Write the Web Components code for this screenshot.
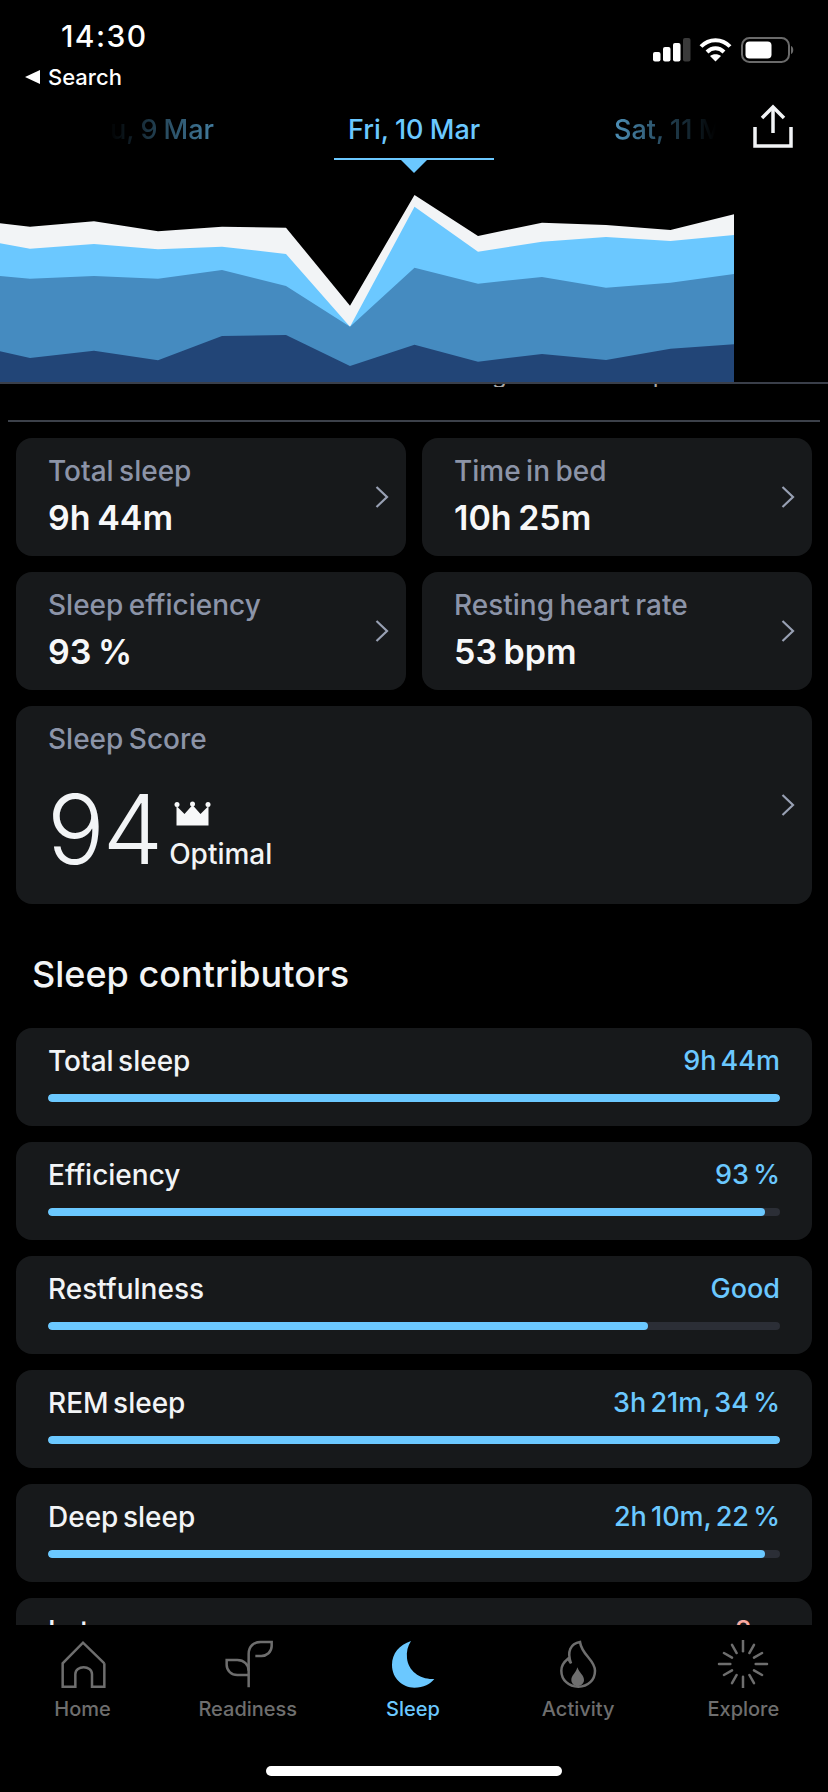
<!DOCTYPE html>
<html lang="en">
<head>
<meta charset="utf-8">
<title>Sleep</title>
<style>
html,body{margin:0;padding:0;background:#000;width:828px;height:1792px;overflow:hidden}
body{font-family:Inter,"Liberation Sans",sans-serif;color:#f2f4f6}
</style>
</head>
<body>
<sleep-app>
  <status-bar slot="status"></status-bar>
  <date-strip slot="dates"></date-strip>
  <sleep-chart slot="chart"></sleep-chart>
  <metric-card><span slot="label">Total sleep</span>9h 44m</metric-card>
  <metric-card><span slot="label">Time in bed</span>10h 25m</metric-card>
  <metric-card><span slot="label">Sleep efficiency</span>93 %</metric-card>
  <metric-card><span slot="label">Resting heart rate</span>53 bpm</metric-card>
  <score-card slot="score"></score-card>
  <contributor-row slot="rows" value="100"><span slot="label">Total sleep</span>9h 44m</contributor-row>
  <contributor-row slot="rows" value="98"><span slot="label">Efficiency</span>93 %</contributor-row>
  <contributor-row slot="rows" value="82"><span slot="label">Restfulness</span>Good</contributor-row>
  <contributor-row slot="rows" value="100"><span slot="label">REM sleep</span>3h 21m, 34 %</contributor-row>
  <contributor-row slot="rows" value="98"><span slot="label">Deep sleep</span>2h 10m, 22 %</contributor-row>
  <contributor-row slot="rows" value="30" tone="warn"><span slot="label">Latency</span>8 m</contributor-row>
  <tab-bar slot="tabs"></tab-bar>
</sleep-app>
<script>
function define(name, html){
  customElements.define(name, class extends HTMLElement{
    constructor(){super();this.attachShadow({mode:'open'}).innerHTML=html;}
    connectedCallback(){
      const fill=this.shadowRoot.querySelector('.fill');
      if(fill) fill.style.width=(this.getAttribute('value')||0)+'%';
      if(this.getAttribute('tone')==='warn') this.shadowRoot.querySelector('.val').style.color='#f9a9a0';
    }
  });
}
const chevron='<svg class="chev" width="14" height="24" viewBox="0 0 14 24"><path d="M1.5 2 L12 12 L1.5 22" fill="none" stroke="#98a0b3" stroke-width="2.2"/></svg>';

define('sleep-app',`<style>
:host{display:flex;flex-direction:column;width:828px;height:1792px;background:#000;overflow:hidden}
.scroll{flex:1;min-height:0;overflow:hidden}
.peek{height:3px;overflow:hidden;display:flex;color:#a8a8a8;font-size:24px;line-height:24px;padding-left:492px;gap:146px}
.peek span{display:block;margin-top:-21px}
hr{border:0;height:2px;background:#3c414a;margin:33px 8px 16px}
.grid{display:grid;grid-template-columns:390px 390px;gap:16px;padding:0 16px}
::slotted(score-card){grid-column:1 / span 2}
h2{margin:50px 32px 34px;font:500 36px/40px Inter,"Liberation Sans",sans-serif;color:#f2f4f6}
.rows{display:flex;flex-direction:column;gap:16px;padding:0 16px}
</style>
<slot name="status"></slot><slot name="dates"></slot><slot name="chart"></slot>
<div class="scroll">
  <div class="peek"><span>g</span><span>p</span></div>
  <hr>
  <div class="grid"><slot></slot><slot name="score"></slot></div>
  <h2>Sleep contributors</h2>
  <div class="rows"><slot name="rows"></slot></div>
</div>
<slot name="tabs"></slot>`);

define('status-bar',`<style>
:host{display:flex;justify-content:space-between;height:90px;box-sizing:border-box;position:relative;color:#fff}
.left{padding:19px 0 0 25px;display:flex;flex-direction:column}
.time{font:500 30px/35px Inter,"Liberation Sans",sans-serif;padding-left:36px;letter-spacing:1.4px}
.back{display:flex;align-items:center;gap:8px;font:500 22px/28px Inter,"Liberation Sans",sans-serif;margin-top:9px}
.right{padding:37px 33px 0 0;display:flex;gap:8px;align-items:flex-start}
.wifi{margin-right:1px}
</style>
<div class="left"><div class="time">14:30</div>
<div class="back"><svg width="15" height="14" viewBox="0 0 15 14"><path d="M15 0V14L0 7Z" fill="#fff"/></svg><span>Search</span></div></div>
<div class="right">
<svg width="38" height="25" viewBox="0 0 38 25"><rect x="0" y="15" width="7.5" height="9.500" rx="2" fill="#fff"/><rect x="10" y="10" width="7.500" height="14.500" rx="2" fill="#fff"/><rect x="20" y="6" width="7.500" height="18.500" rx="2" fill="#fff"/><rect x="30" y="1" width="7.500" height="23.500" rx="2" fill="#3a3a3a"/></svg>
<svg class="wifi" width="33" height="25" viewBox="0 0 33 25"><g fill="none" stroke="#fff" stroke-width="4"><path d="M2 9.500 C10 1 23 1 31 9.500"/><path d="M8 15 C13 10 20 10 25 15"/></g><path d="M16.500 24.500 L11 19 C14 16.500 19 16.500 22 19Z" fill="#fff"/></svg>
<svg width="54" height="26" viewBox="0 0 54 26"><rect x="1" y="1" width="47" height="24" rx="7.500" fill="none" stroke="#6a6a6a" stroke-width="2"/><rect x="4.500" y="4.500" width="26" height="17" rx="4" fill="#fff"/><path d="M50 9 C53 10 53 16 50 17Z" fill="#6a6a6a"/></svg>
</div>`);

define('date-strip',`<style>
:host{display:flex;height:84px;position:relative;justify-content:center;gap:134px;font:500 27px/36px Inter,"Liberation Sans",sans-serif;word-spacing:-1px;white-space:nowrap;color:#6bc8ff;box-sizing:border-box;padding-top:22px;overflow:hidden}
.side{width:150px;flex:none}
.prev{text-align:right;-webkit-mask-image:linear-gradient(to left,rgba(0,0,0,.62),rgba(0,0,0,.38) 48px,transparent 105px);mask-image:linear-gradient(to left,rgba(0,0,0,.62),rgba(0,0,0,.38) 48px,transparent 105px)}
.next{-webkit-mask-image:linear-gradient(to right,rgba(0,0,0,.72),rgba(0,0,0,.25) 65px,transparent 102px);mask-image:linear-gradient(to right,rgba(0,0,0,.72),rgba(0,0,0,.25) 65px,transparent 102px)}
.cur{flex:none;width:132px;text-align:center}
.line{position:absolute;left:334px;width:160px;top:68px;height:2px;background:#6bc8ff}
.tri{position:absolute;left:401px;top:70px}
.share{position:absolute;left:751px;top:14px}
</style>
<div class="side prev">Thu, 9 Mar</div><div class="cur">Fri, 10 Mar</div><div class="side next">Sat, 11 Mar</div>
<div class="line"></div>
<svg class="tri" width="26" height="13" viewBox="0 0 26 13"><path d="M0 0H26L13 13Z" fill="#6bc8ff"/></svg>
<svg class="share" width="44" height="44" viewBox="0 0 44 44" fill="none" stroke="#f2f4f6" stroke-width="3.500"><path d="M22 3V29"/><path d="M11 14 L22 3 L33 14"/><path d="M4 23V42H40V23"/></svg>`);

const X=[0,30,94,158,222,286,350,414.5,478,542,606,670.5,734];
const bands=[
 ['#f2f4f6',[223.3,226.7,221.3,231.3,226.7,227.7,305.7,195,236,222.7,225,230,214.3]],
 ['#6bc8ff',[243.3,248.7,244,249.3,246.7,254,326.7,206.7,251.7,241.7,237,241,235]],
 ['#458bc0',[276,278.7,276,278.7,270,286,326.7,267.7,283.7,277,287.7,282.7,274]],
 ['#224577',[351.3,358,350.7,360.3,336,335,366,344.7,361.7,354,360,348.7,344.3]]];
const polys=bands.map(([c,ys])=>`<polygon fill="${c}" points="0,382 ${ys.map((y,i)=>X[i]+','+y).join(' ')} 734,382"/>`).join('');
define('sleep-chart',`<style>
:host{display:block;height:208px;border-bottom:2px solid #3a3f4a}
svg{display:block}
</style>
<svg width="828" height="208" viewBox="0 174 828 208">${polys}</svg>`);

define('metric-card',`<style>
:host{display:flex;align-items:center;justify-content:space-between;box-sizing:border-box;height:118px;background:#17191b;border-radius:16px;padding:0 17px 0 32px}
.text{align-self:flex-start;padding-top:17px}
.label{font:500 28px/32px Inter,"Liberation Sans",sans-serif;word-spacing:-2px;color:#8c94a8;display:block}
.value{font:600 34px/40px Inter,"Liberation Sans",sans-serif;word-spacing:-2px;color:#f7f8f9;display:block;margin-top:11px}
.chev{display:block;margin-top:-1px}
</style>
<div class="text"><div class="label"><slot name="label"></slot></div><div class="value"><slot></slot></div></div>${chevron}`);

define('score-card',`<style>
:host{display:flex;justify-content:space-between;align-items:flex-start;box-sizing:border-box;height:198px;background:#17191b;border-radius:16px;padding:17px 17px 0 32px}
.label{font:500 28px/32px Inter,"Liberation Sans",sans-serif;word-spacing:-2px;color:#8c94a8}
.row{display:flex;align-items:flex-end;margin-top:24px}
.num{font:300 96px/100px Inter,"Liberation Sans",sans-serif;color:#f2f4f6;letter-spacing:-2px;margin-left:-1px}
.side{margin-left:8px;padding-bottom:9px;display:flex;flex-direction:column}
.side svg{display:block;margin:0 0 12px 5px}
.side span{font:500 28px/32px Inter,"Liberation Sans",sans-serif;color:#f2f4f6}
.chev{display:block;margin-top:70px}
</style>
<div><div class="label">Sleep Score</div>
<div class="row"><div class="num">94</div><div class="side">
<svg width="37" height="25" viewBox="0 0 37 25" fill="#f7f8f9"><circle cx="3" cy="3.500" r="2.500"/><circle cx="18.500" cy="3" r="2.500"/><circle cx="34" cy="3.500" r="2.500"/><path d="M2.500 5 L10.500 13 L18.500 4 L26.500 13 L34.500 5 V24.500 H2.500Z"/></svg>
<span>Optimal</span></div></div></div>${chevron}`);

define('contributor-row',`<style>
:host{display:block;box-sizing:border-box;height:98px;background:#17191b;border-radius:16px;padding:17px 32px 0;flex:none}
.top{display:flex;justify-content:space-between;font:500 28px/32px Inter,"Liberation Sans",sans-serif;word-spacing:-3px;color:#f2f4f6}
.val{color:#6bc8ff;font-size:27px}
.track{margin-top:17px;height:8px;border-radius:4px;background:#2b2e36;overflow:hidden}
.fill{height:100%;background:#6bc8ff;border-radius:4px}
</style>
<div class="top"><span><slot name="label"></slot></span><span class="val"><slot></slot></span></div>
<div class="track"><div class="fill"></div></div>`);

define('tab-item',`<style>
:host{display:flex;flex-direction:column;align-items:center;color:#6e6e6e;font:500 20px/26px Inter,"Liberation Sans",sans-serif}
:host([active]){color:#6bc8ff}
.ic{height:48px;margin-bottom:8px}
</style><div class="ic"><slot name="icon"></slot></div><slot></slot>`);

const spokes=Array.from({length:12},(_,i)=>{
  const a=i*Math.PI/6, long=i%3===0, r1=long?72:66, r0=38;
  const s=Math.sin(a),c=Math.cos(a);
  return `<path d="M${(1122+r0*s).toFixed(1)} ${(102-r0*c).toFixed(1)}L${(1122+r1*s).toFixed(1)} ${(102-r1*c).toFixed(1)}"/>`;
}).join('');
define('tab-bar',`<style>
:host{display:block;height:167px;background:#000;box-sizing:border-box;padding-top:15px;position:relative}
.items{display:grid;grid-template-columns:repeat(5,165.2px)}
svg{display:block}
.home{position:absolute;left:266px;top:141px;width:296px;height:10px;border-radius:5px;background:#fff}
</style>
<div class="items">
<tab-item><svg slot="icon" width="60" height="48" viewBox="68 30 180 144" fill="none" stroke="#6e6e6e" stroke-width="7.500" stroke-linejoin="miter"><path d="M222 100 L158 38 L97 100 V170 H135 V133 C135 105 185 105 185 133 V170 H222 V100"/></svg>Home</tab-item>
<tab-item><svg slot="icon" width="60" height="48" viewBox="564 30 180 144" fill="none" stroke="#6e6e6e" stroke-width="7.500"><path d="M656 172 V72 C656 48 672 36 692 36 H725 V48 C725 66 710 78 694 78 H676"/><path d="M656 135 H622 C604 135 590 122 590 105 V90 H622 C642 90 656 104 656 122"/></svg>Readiness</tab-item>
<tab-item active><svg slot="icon" width="60" height="48" viewBox="36 30 180 144" fill="#6bc8ff"><path d="M120 33 C85 45 63 70 63 105 C63 145 95 173 130 173 C158 173 178 162 190 147 C150 150 112 125 108 85 C106 65 110 48 120 33Z"/></svg>Sleep</tab-item>
<tab-item><svg slot="icon" width="60" height="48" viewBox="534 30 180 144"><path d="M630 36 C602 40 590 65 603 100 L594 86 C581 96 574 108 574 122 C574 150 596 170 625 170 C654 170 675 150 675 122 C675 90 635 75 630 36Z" fill="none" stroke="#6e6e6e" stroke-width="7.500"/><path d="M622 112 C618 130 604 135 604 150 C604 160 612 168 622 168 C634 168 642 160 642 150 C642 135 628 130 622 112Z" fill="#6e6e6e"/></svg>Activity</tab-item>
<tab-item><svg slot="icon" width="60" height="48" viewBox="1032 30 180 144" fill="none" stroke="#6e6e6e" stroke-width="7.500" stroke-linecap="round">${spokes}</svg>Explore</tab-item>
</div>
<div class="home"></div>`);
</script>
</body>
</html>
